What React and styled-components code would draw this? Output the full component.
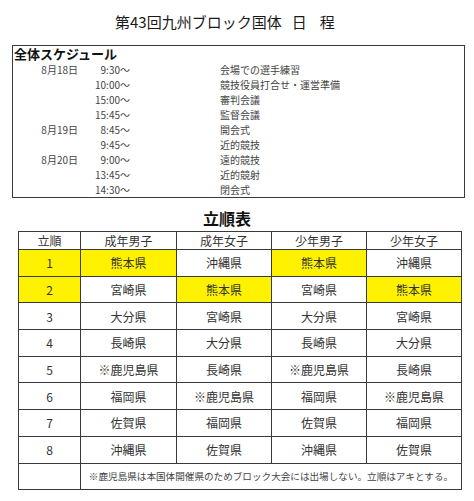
import React from "react";
import styled, { createGlobalStyle } from "styled-components";

const GlobalStyle = createGlobalStyle`
    body {
        margin: 0;
        background: #ffffff;
        font-family: "Noto Sans CJK JP", "Noto Sans", sans-serif;
        color: #222;
    }
`;

const schedule = [
    { date: "8月18日", time: "9:30～", event: "会場での選手練習" },
    { date: "", time: "10:00～", event: "競技役員打合せ・運営準備" },
    { date: "", time: "15:00～", event: "審判会議" },
    { date: "", time: "15:45～", event: "監督会議" },
    { date: "8月19日", time: "8:45～", event: "開会式" },
    { date: "", time: "9:45～", event: "近的競技" },
    { date: "8月20日", time: "9:00～", event: "遠的競技" },
    { date: "", time: "13:45～", event: "近的競射" },
    { date: "", time: "14:30～", event: "閉会式" },
];

const headers = ["立順", "成年男子", "成年女子", "少年男子", "少年女子"];

// hl = highlighted (yellow) cells
const order = [
    { cells: ["熊本県", "沖縄県", "熊本県", "沖縄県"], hl: [true, false, true, false], rankHl: true },
    { cells: ["宮崎県", "熊本県", "宮崎県", "熊本県"], hl: [false, true, false, true], rankHl: true },
    { cells: ["大分県", "宮崎県", "大分県", "宮崎県"] },
    { cells: ["長崎県", "大分県", "長崎県", "大分県"] },
    { cells: ["※鹿児島県", "長崎県", "※鹿児島県", "長崎県"] },
    { cells: ["福岡県", "※鹿児島県", "福岡県", "※鹿児島県"] },
    { cells: ["佐賀県", "福岡県", "佐賀県", "福岡県"] },
    { cells: ["沖縄県", "佐賀県", "沖縄県", "佐賀県"] },
];

function App() {
    return (
        <Page>
            <GlobalStyle />
            <Title>
                第43回九州ブロック国体<TitleGap>日</TitleGap>
                <TitleGap wide>程</TitleGap>
            </Title>

            <ScheduleBox>
                <ScheduleHeading>全体スケジュール</ScheduleHeading>
                {schedule.map((row, i) => (
                    <ScheduleRow key={i}>
                        <DateCell>{row.date}</DateCell>
                        <TimeCell>{row.time}</TimeCell>
                        <EventCell>{row.event}</EventCell>
                    </ScheduleRow>
                ))}
            </ScheduleBox>

            <SubTitle>立順表</SubTitle>

            <OrderTable>
                <colgroup>
                    <col style={{ width: 62 }} />
                    <col style={{ width: 96 }} />
                    <col style={{ width: 95 }} />
                    <col style={{ width: 95 }} />
                    <col style={{ width: 95 }} />
                </colgroup>
                <thead>
                    <tr>
                        {headers.map((h) => (
                            <HeadCell key={h}>{h}</HeadCell>
                        ))}
                    </tr>
                </thead>
                <tbody>
                    {order.map((row, i) => (
                        <tr key={i}>
                            <Cell yellow={row.rankHl}>{i + 1}</Cell>
                            {row.cells.map((c, j) => (
                                <Cell key={j} yellow={row.hl && row.hl[j]}>
                                    {c}
                                </Cell>
                            ))}
                        </tr>
                    ))}
                    <tr>
                        <Cell />
                        <NoteCell colSpan={4}>
                            ※鹿児島県は本国体開催県のためブロック大会には出場しない。立順はアキとする。
                        </NoteCell>
                    </tr>
                </tbody>
            </OrderTable>
        </Page>
    );
}

const Page = styled.div`
    width: 474px;
    padding-top: 11px;
    display: flex;
    flex-direction: column;
`;

const Title = styled.div`
    padding-left: 115px;
    height: 22px;
    font-size: 15px;
    line-height: 22px;
    color: #1a1a1a;
    white-space: nowrap;
`;

const TitleGap = styled.span`
    margin-left: ${(props) => (props.wide ? "13px" : "10px")};
`;

const ScheduleBox = styled.div`
    margin: 12px 0 0 12px;
    width: 451px;
    border: 1.5px solid #3a3a3a;
    display: flex;
    flex-direction: column;
`;

const ScheduleHeading = styled.div`
    height: 16px;
    padding-left: 1px;
    font-size: 13px;
    font-weight: bold;
    line-height: 16px;
    color: #111;
`;

const ScheduleRow = styled.div`
    display: grid;
    grid-template-columns: 65px 52px 1fr;
    height: 15px;
    font-size: 10px;
    line-height: 15px;
    color: #444;
`;

const DateCell = styled.div`
    text-align: right;
`;

const TimeCell = styled.div`
    text-align: right;
`;

const EventCell = styled.div`
    padding-left: 90px;
    white-space: nowrap;
`;

const SubTitle = styled.div`
    margin-top: 8px;
    padding-left: 203px;
    height: 24px;
    font-size: 16px;
    font-weight: bold;
    line-height: 24px;
    color: #111;
`;

const OrderTable = styled.table`
    margin: 1px 0 0 18px;
    width: 443px;
    border-collapse: collapse;
    table-layout: fixed;
    font-size: 12px;
    color: #333;
`;

const HeadCell = styled.th`
    height: 17px;
    padding: 0;
    border: 1px solid #3a3a3a;
    font-weight: normal;
    text-align: center;
    line-height: 17px;
`;

const Cell = styled.td`
    height: 25.7px;
    padding: 0;
    border: 1px solid #3a3a3a;
    background: ${(props) => (props.yellow ? "#fff200" : "#ffffff")};
    text-align: center;
    white-space: nowrap;
`;

const NoteCell = styled(Cell)`
    font-size: 9.6px;
    color: #444;
`;

export default App;
